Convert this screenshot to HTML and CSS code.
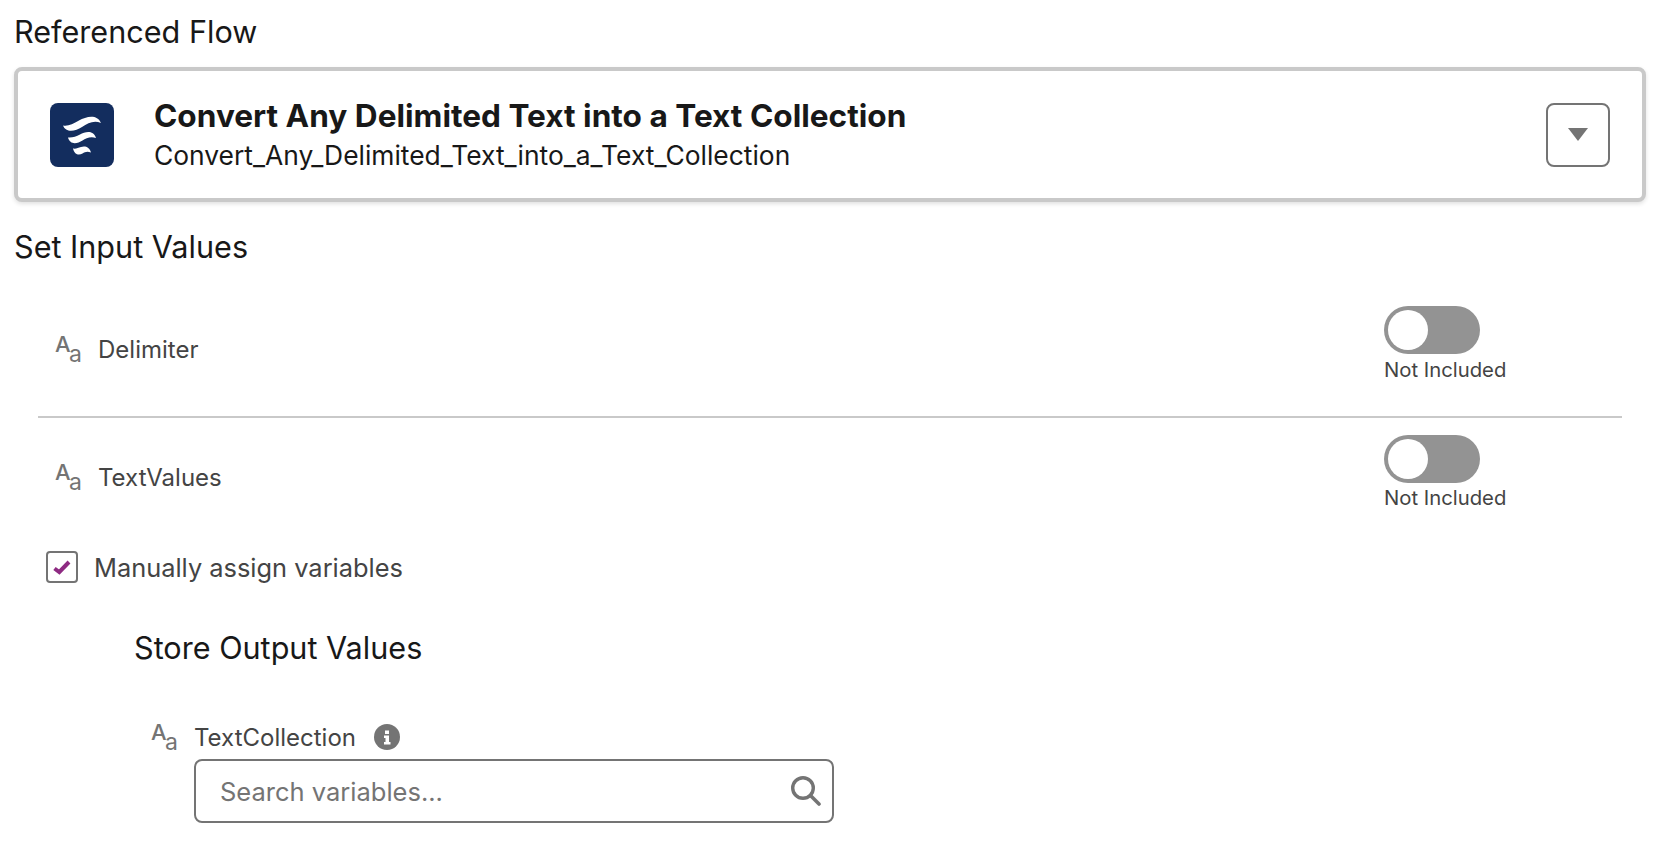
FILE: index.html
```html
<!DOCTYPE html>
<html lang="en">
<head>
<meta charset="utf-8">
<title>Referenced Flow</title>
<link rel="stylesheet" href="styles.css">
</head>
<body>
<main class="page">
  <h2 class="heading heading-first">Referenced Flow</h2>
  <section class="card">
    <div class="flow-icon">
      <svg viewBox="0 0 64 64" width="64" height="64" aria-hidden="true">
        <path fill="#fff" d="M13 22.500C18 23.500 23 21 29 17.500C36 13.500 47 10.500 51 20C44 17 38 20 32 24C25 28.500 16 30 13 22.500z"/>
        <path fill="#fff" d="M18 34.500C22 35 26 33.500 30 31.500C35 29 43 26.500 46 35C41 33 36 35 32.500 37.500C27 41 20 42 18 34.500z"/>
        <path fill="#fff" d="M23 45.500C26 46 28 45 31 44C35 42.500 39.500 44 41 49.500C37 48 35 49 32.500 50.500C29 52.500 24.500 52 23 45.500z"/>
      </svg>
    </div>
    <div class="card-text">
      <div class="card-title">Convert Any Delimited Text into a Text Collection</div>
      <div class="card-sub">Convert_Any_Delimited_Text_into_a_Text_Collection</div>
    </div>
    <button class="menu-btn" type="button" aria-label="Show menu">
      <svg viewBox="0 0 20 13" width="20" height="13" aria-hidden="true"><path fill="#747474" d="M0 0h20L10 13z"/></svg>
    </button>
  </section>
  <h2 class="heading heading-input">Set Input Values</h2>
  <div class="param">
    <div class="param-label"><span class="type-icon"><span class="big">A</span><span class="small">a</span></span><span>Delimiter</span></div>
    <div class="toggle-wrap"><span class="toggle"><span class="knob"></span></span><span class="toggle-text">Not Included</span></div>
  </div>
  <div class="param param-divided">
    <div class="param-label"><span class="type-icon"><span class="big">A</span><span class="small">a</span></span><span>TextValues</span></div>
    <div class="toggle-wrap"><span class="toggle"><span class="knob"></span></span><span class="toggle-text">Not Included</span></div>
  </div>
  <label class="check-row">
    <span class="checkbox">
      <svg viewBox="0 0 18 16" width="18" height="16" aria-hidden="true"><path fill="none" stroke="#8e2a82" stroke-width="4" d="M1.500 9.500l4.800 3.500L16 3"/></svg>
    </span>
    <span>Manually assign variables</span>
  </label>
  <section class="output">
    <h2 class="heading">Store Output Values</h2>
    <div class="output-label"><span class="type-icon"><span class="big">A</span><span class="small">a</span></span><span>TextCollection</span>
      <svg class="info" viewBox="0 0 26 26" width="26" height="26" aria-hidden="true"><circle cx="13" cy="13" r="13" fill="#747474"/><path fill="#fff" d="M11 6.500h4v3.500h-4zM10 11.500h5v6.500h1.500v2.500h-6.500v-2.500h1.500v-4h-1.500z"/></svg>
    </div>
    <div class="search">
      <span class="placeholder">Search variables...</span>
      <svg viewBox="0 0 30 30" width="30" height="30" aria-hidden="true"><circle cx="12" cy="12" r="10.300" fill="none" stroke="#747474" stroke-width="3.400"/><path stroke="#747474" stroke-width="3.600" stroke-linecap="round" d="M20 20l8 8"/></svg>
    </div>
  </section>
</main>
</body>
</html>
```
FILE: styles.css
```css
* { box-sizing: border-box; }
html, body { margin: 0; height: 100%; background: #fff; overflow: hidden; }
body { font-family: Inter, "Liberation Sans", sans-serif; color: #444; }
.page { padding: 14px 12px 0 14px; }
.heading { margin: 0; font-size: 30.600px; line-height: 36px; font-weight: 400; color: #181818; }
.card {
  display: flex; align-items: center; height: 135px; margin-top: 17px; padding: 0 32px;
  border: 4px solid #c9c9c9; border-radius: 8px; background: #fff;
  box-shadow: 0 2px 4px rgba(0,0,0,.12);
}
.flow-icon { width: 64px; height: 64px; background: #132d5e; border-radius: 8px; flex: none; }
.flow-icon svg { display: block; }
.card-text { flex: 1; margin-left: 40px; padding-bottom: 1px; color: #181818; }
.card-title { font-size: 31.600px; line-height: 38px; font-weight: 700; }
.card-sub { font-size: 26.400px; line-height: 32px; margin-top: 4px; }
.menu-btn {
  width: 64px; height: 64px; border: 2px solid #747474; border-radius: 8px; background: #fff;
  display: flex; align-items: center; justify-content: center; padding: 0; flex: none;
}
.heading-input { margin-top: 27px; }
.param { display: flex; justify-content: space-between; height: 127px; margin: 24px 24px 0 24px; padding: 17px 0 0 0; }
.param-divided { border-top: 2px solid #c9c9c9; margin-top: 0; }
.param-label { display: flex; align-items: center; height: 48px; margin-top: 19px; font-size: 24px; }
.param-divided .param-label { margin-top: 18px; }
.type-icon { position: relative; display: inline-block; width: 29px; height: 30px; margin: 0 14px 0 17px; color: #747474; flex: none; }
.big { position: absolute; left: 0; top: -5px; font-size: 22px; line-height: 30px; font-weight: 500; }
.small { position: absolute; left: 14px; top: 5px; font-size: 23px; line-height: 30px; }
.toggle-wrap { display: flex; flex-direction: column; width: 238px; }
.toggle { display: block; width: 96px; height: 48px; border-radius: 24px; background: #939393; padding: 4px; }
.knob { display: block; width: 40px; height: 40px; border-radius: 50%; background: #fff; }
.toggle-text { font-size: 20.300px; line-height: 30px; margin-top: 1px; }
.param-divided .toggle-text { margin-top: 0; }
.check-row { display: flex; align-items: center; margin: 8px 0 0 32px; height: 32px; font-size: 25.400px; }
.checkbox {
  width: 32px; height: 32px; border: 2px solid #747474; border-radius: 4px; margin-right: 16px;
  display: flex; align-items: center; justify-content: center; flex: none;
}
.output { margin: 47px 0 0 120px; }
.output-label { display: flex; align-items: center; height: 32px; margin-top: 55px; font-size: 24px; }
.output-label .type-icon { margin: 0 14px 0 17px; }
.info { margin-left: 18px; }
.search {
  display: flex; align-items: center; justify-content: space-between; width: 640px; height: 64px;
  margin: 6px 0 0 60px; padding: 0 11px 0 24px; border: 2px solid #747474; border-radius: 8px; font-size: 25.500px; color: #747474;
}
```
